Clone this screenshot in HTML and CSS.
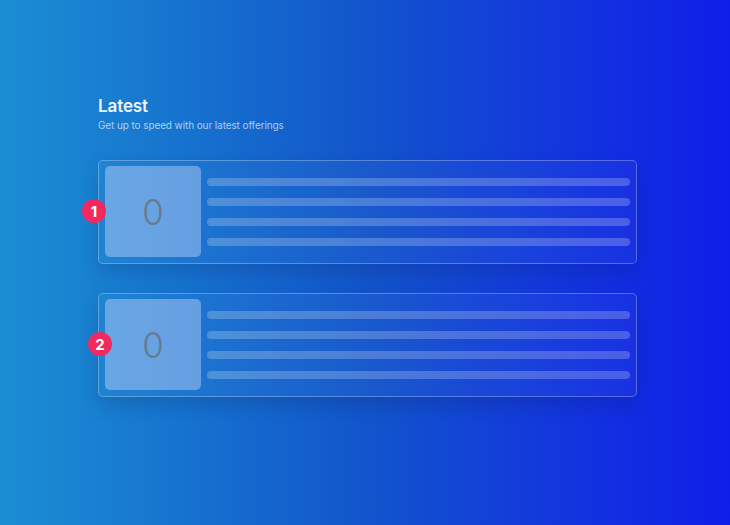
FILE: index.html
```html
<!DOCTYPE html>
<html>
<head>
<meta charset="utf-8">
<link rel="stylesheet" href="styles.css">
</head>
<body>
<main class="page">
  <header class="head">
    <h1 class="title">Latest</h1>
    <p class="subtitle">Get up to speed with our latest offerings</p>
  </header>
  <section class="list">
    <article class="card">
      <span class="badge badge-1">1</span>
      <div class="thumb">0</div>
      <div class="lines">
        <span class="line"></span>
        <span class="line"></span>
        <span class="line"></span>
        <span class="line"></span>
      </div>
    </article>
    <article class="card">
      <span class="badge badge-2">2</span>
      <div class="thumb">0</div>
      <div class="lines">
        <span class="line"></span>
        <span class="line"></span>
        <span class="line"></span>
        <span class="line"></span>
      </div>
    </article>
  </section>
</main>
</body>
</html>
```
FILE: styles.css
```css
html, body {
  margin: 0;
  padding: 0;
  height: 100%;
}
body {
  font-family: Inter, "Liberation Sans", sans-serif;
  background: linear-gradient(90deg, #1b8ed3 0%, #1673cf 25%, #1255cb 50%, #1238dc 75%, #101ee9 100%);
  overflow: hidden;
}
.page {
  padding: 96px 0 0 98px;
  width: 539px;
}
.head {
  margin-bottom: 28px;
}
.title {
  margin: 0;
  font-size: 17px;
  font-weight: 600;
  line-height: 20px;
  color: #eef3fb;
  letter-spacing: -0.1px;
}
.subtitle {
  margin: 2px 0 0;
  font-size: 10px;
  line-height: 14px;
  letter-spacing: -0.1px;
  color: rgba(220, 232, 250, 0.78);
}
.list {
  display: flex;
  flex-direction: column;
  gap: 29px;
}
.card {
  position: relative;
  display: flex;
  gap: 6px;
  padding: 5px 6px 6px 6px;
  border: 1px solid rgba(255, 255, 255, 0.28);
  border-radius: 5px;
  background: rgba(255, 255, 255, 0.03);
  box-shadow: 0 8px 18px rgba(10, 20, 80, 0.18);
}
.thumb {
  flex: 0 0 96px;
  height: 91px;
  border-radius: 5px;
  background: rgba(195, 210, 250, 0.45);
  color: #687a8f;
  font-size: 35px;
  font-weight: 300;
  display: flex;
  align-items: center;
  justify-content: center;
}
.lines {
  flex: 1;
  display: flex;
  flex-direction: column;
  justify-content: center;
  gap: 12px;
}
.line {
  display: block;
  height: 8px;
  border-radius: 4px;
  background: rgba(255, 255, 255, 0.22);
}
.badge {
  position: absolute;
  top: 38px;
  width: 24px;
  height: 24px;
  border-radius: 50%;
  background: #f2295f;
  color: #fff;
  font-size: 15px;
  font-weight: 700;
  display: flex;
  align-items: center;
  justify-content: center;
}
.badge-1 { left: -17px; }
.badge-2 { left: -11px; }
```
